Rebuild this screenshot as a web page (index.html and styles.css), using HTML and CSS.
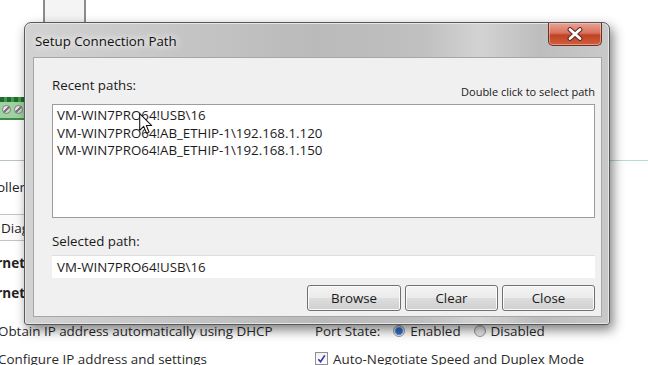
FILE: index.html
```html
<!DOCTYPE html>
<html>
<head>
<meta charset="utf-8">
<link rel="stylesheet" href="styles.css">
</head>
<body>
<div class="screen">
  <div class="app">
    <div class="topbar"><div class="topcell"></div></div>
    <div class="middle">
      <div class="side">
        <div class="terminal">
          <div class="term-top"></div>
          <div class="term-screws"><span class="screw"></span><span class="screw"></span></div>
        </div>
        <div class="side-line"></div>
        <div class="clip end ctrl"><span>Controller</span></div>
        <div class="clip tab"><span>Diagnostics</span></div>
        <div class="clip end bold first"><span>Ethernet</span></div>
        <div class="clip end bold"><span>Ethernet</span></div>
      </div>
      <div class="rightside"><div class="teal-line"></div></div>
    </div>
    <div class="rows">
      <div class="row">
        <div class="cell-left">Obtain IP address automatically using DHCP</div>
        <div class="cell-right">
          <span>Port State:</span>
          <span class="radio on"></span><span>Enabled</span>
          <span class="radio"></span><span>Disabled</span>
        </div>
      </div>
      <div class="row">
        <div class="cell-left">Configure IP address and settings</div>
        <div class="cell-right">
          <span class="check"><svg viewBox="0 0 12 12" width="12" height="12"><path d="M2.5 6.2 L5 9 L9.6 2" fill="none" stroke="#3a2fb0" stroke-width="1.8"/></svg></span>
          <span>Auto-Negotiate Speed and Duplex Mode</span>
        </div>
      </div>
    </div>
  </div>

  <div class="dialog">
    <div class="titlebar">
      <span class="title">Setup Connection Path</span>
      <div class="closebtn">
        <svg viewBox="0 0 20 14" width="20" height="14">
          <path d="M5 2.5 L15 11.5 M15 2.5 L5 11.5" stroke="#5a2a22" stroke-width="4.8" stroke-linecap="round"/>
          <path d="M5 2.5 L15 11.5 M15 2.5 L5 11.5" stroke="#ffffff" stroke-width="2.8" stroke-linecap="round"/>
        </svg>
      </div>
    </div>
    <div class="client">
      <div class="head">
        <span class="label">Recent paths:</span>
        <span class="hint">Double click to select path</span>
      </div>
      <div class="list">
        <div class="item">VM-WIN7PRO64!USB\16</div>
        <div class="item">VM-WIN7PRO64!AB_ETHIP-1\192.168.1.120</div>
        <div class="item">VM-WIN7PRO64!AB_ETHIP-1\192.168.1.150</div>
      </div>
      <div class="label sel">Selected path:</div>
      <div class="textbox">VM-WIN7PRO64!USB\16</div>
      <div class="buttons">
        <div class="btn b1">Browse</div>
        <div class="btn">Clear</div>
        <div class="btn">Close</div>
      </div>
    </div>
  </div>

  <svg class="cursor" viewBox="0 0 13 21" width="14" height="22">
    <path d="M0.5 0.5 L0.5 16.5 L4.3 12.8 L7 19.2 L9.4 18.2 L6.8 12 L12 12 Z" fill="#ffffff" stroke="#111" stroke-width="1" stroke-linejoin="round"/>
  </svg>
</div>
</body>
</html>
```
FILE: styles.css
```css
* { box-sizing: border-box; }
html, body { margin: 0; padding: 0; }
body {
  width: 648px;
  height: 365px;
  overflow: hidden;
  background: #ffffff;
  font-family: "Open Sans", "Noto Sans", sans-serif;
  color: #1f1f1f;
}
.screen {
  position: relative;
  width: 648px;
  height: 365px;
  overflow: hidden;
}

/* background application */
.app {
  display: flex;
  flex-direction: column;
  height: 365px;
}
.app > * { flex: none; }
.topbar {
  height: 22px;
  display: flex;
}
.topcell {
  margin-left: 43px;
  width: 43px;
  height: 22px;
  border-left: 2px solid #8c8c8c;
  border-right: 2px solid #8c8c8c;
  background: #f4f4f4;
}
.middle {
  display: flex;
  height: 299px;
}
.side {
  width: 25px;
  display: flex;
  flex-direction: column;
}
.terminal {
  margin-top: 75px;
  height: 23px;
  display: flex;
  flex-direction: column;
  background: #9fd2a2;
  border-bottom: 2px solid #3f8a48;
}
.term-top {
  height: 5px;
  background: repeating-linear-gradient(to right, #1f6a2c 0 4px, #3f9a4b 4px 7px);
}
.term-screws {
  display: flex;
  gap: 3px;
  padding: 3px 1px 0 2px;
}
.screw {
  width: 9px;
  height: 9px;
  border-radius: 50%;
  background: linear-gradient(135deg, #e8e8e8 0 40%, #7a7a7a 40% 58%, #d0d0d0 58%);
  border: 1px solid #808080;
}
.side-line {
  margin-top: 40px;
  height: 1px;
  background: #b8c4c4;
}
.clip {
  display: flex;
  overflow: hidden;
  white-space: nowrap;
  font-size: 13.5px;
  line-height: 18px;
  color: #222;
}
.clip.end { justify-content: flex-end; }
.ctrl { margin-top: 17px; }
.tab {
  margin-top: 18px;
  height: 27px;
  align-items: center;
  justify-content: flex-start;
  padding-left: 1px;
  border-top: 1px solid #c4c4c4;
  border-bottom: 1px solid #c4c4c4;
  background: #fbfbfb;
}
.bold { font-weight: 700; margin-top: 12px; }
.bold.first { margin-top: 13px; }
.rightside { flex: 1; }
.teal-line {
  margin-top: 138px;
  margin-left: 585px;
  height: 1px;
  background: #b4dcd8;
}
.rows {
  display: flex;
  flex-direction: column;
  gap: 9px;
  font-size: 13.4px;
  color: #2a2a2a;
}
.row {
  display: flex;
  height: 19px;
  align-items: center;
}
.cell-left {
  width: 315px;
  margin-left: -2px;
  white-space: nowrap;
  flex: none;
}
.cell-right {
  display: flex;
  align-items: center;
  gap: 5px;
  margin-left: 2px;
  white-space: nowrap;
}
.radio {
  width: 12px;
  height: 12px;
  border-radius: 50%;
  border: 1px solid #9a9a9a;
  background: radial-gradient(circle, #f4f4f4, #dcdcdc);
  margin-left: 8px;
}
.radio.on {
  background: radial-gradient(circle, #2f6fd0 0 3px, #5b9be0 3px 4px, #e6e6e6 4px);
}
.check {
  width: 13px;
  height: 13px;
  border: 1px solid #8e8f8f;
  background: linear-gradient(#f0f0f0, #ffffff);
  display: flex;
}
.check svg { display: block; }

/* dialog window */
.dialog {
  position: absolute;
  left: 24px;
  top: 22px;
  width: 586px;
  height: 303px;
  display: flex;
  flex-direction: column;
  border: 1px solid #55585c;
  border-radius: 7px 7px 3px 3px;
  background: linear-gradient(to right, #d2d2d2, #c6c6c6 25%, #bababa 50%, #c0c0c0 68%, #d3d3d3 78%, #bdbdbd 88%, #c9c9c9);
  box-shadow: 3px 5px 12px rgba(0, 0, 0, 0.5), inset 0 0 0 1px #e6e6e6;
}
.titlebar {
  height: 34px;
  display: flex;
  align-items: flex-start;
  justify-content: space-between;
  padding-left: 10px;
  padding-right: 7px;
}
.title {
  margin-top: 9px;
  font-size: 13.3px;
  line-height: 18px;
  color: #111;
  text-shadow: 0 0 6px #ffffff, 0 0 10px #ffffff;
}
.closebtn {
  width: 54px;
  height: 23px;
  border: 1px solid #6b3127;
  border-top: none;
  border-radius: 0 0 5px 5px;
  background: linear-gradient(#eaa293, #d8735d 45%, #c04325 55%, #cf5e3d);
  box-shadow: inset 0 0 0 1px rgba(255, 210, 200, 0.5);
  display: flex;
  align-items: center;
  justify-content: center;
}
.closebtn svg { display: block; }
.client {
  flex: 1;
  margin: 0 7px 7px 8px;
  background: #f0f0f0;
  border: 1px solid #a3a7ab;
  padding: 0 6px 0 18px;
  display: flex;
  flex-direction: column;
}
.head {
  margin-top: 18px;
  display: flex;
  justify-content: space-between;
  align-items: flex-start;
}
.label {
  font-size: 13.3px;
  line-height: 18px;
  color: #1a1a1a;
}
.hint {
  font-size: 11px;
  line-height: 14px;
  padding-top: 9px;
  color: #1a1a1a;
}
.list {
  margin-top: 5px;
  height: 114px;
  background: #ffffff;
  border: 1px solid #9c9c9c;
  padding: 2px 4px;
}
.item {
  font-size: 13.3px;
  line-height: 17.5px;
  white-space: nowrap;
  color: #1c1c1c;
}
.sel { margin-top: 14px; }
.textbox {
  margin-top: 5px;
  height: 23px;
  background: #ffffff;
  border-top: 1px solid #dedede;
  padding-left: 5px;
  font-size: 13.3px;
  line-height: 22px;
  color: #1c1c1c;
}
.buttons {
  margin-top: 7px;
  display: flex;
  justify-content: flex-end;
  gap: 4px;
}
.btn {
  width: 93px;
  height: 26px;
  border: 1px solid #707070;
  border-radius: 3px;
  background: linear-gradient(#f3f3f3, #ebebeb 48%, #dddddd 52%, #cfcfcf);
  box-shadow: inset 0 0 0 1px #fbfbfb;
  display: flex;
  align-items: center;
  justify-content: center;
  font-size: 13.3px;
  color: #1a1a1a;
}
.btn.b1 { width: 94px; }

.cursor {
  position: absolute;
  left: 139px;
  top: 113px;
}
```
